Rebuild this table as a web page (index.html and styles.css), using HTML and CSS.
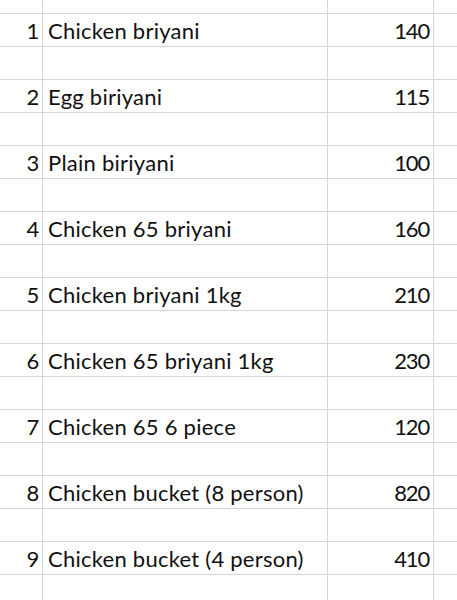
FILE: index.html
```html
<!DOCTYPE html>
<html>
<head>
<meta charset="utf-8">
<link rel="stylesheet" href="styles.css">
</head>
<body>
<div class="sheet">
  <div class="cell top"></div><div class="cell top"></div><div class="cell top"></div><div class="cell top"></div>

  <div class="cell num">1</div><div class="cell txt">Chicken briyani</div><div class="cell num">140</div><div class="cell"></div>
  <div class="cell"></div><div class="cell"></div><div class="cell"></div><div class="cell"></div>
  <div class="cell num">2</div><div class="cell txt">Egg biriyani</div><div class="cell num">115</div><div class="cell"></div>
  <div class="cell"></div><div class="cell"></div><div class="cell"></div><div class="cell"></div>
  <div class="cell num">3</div><div class="cell txt">Plain biriyani</div><div class="cell num">100</div><div class="cell"></div>
  <div class="cell"></div><div class="cell"></div><div class="cell"></div><div class="cell"></div>
  <div class="cell num">4</div><div class="cell txt">Chicken 65 briyani</div><div class="cell num">160</div><div class="cell"></div>
  <div class="cell"></div><div class="cell"></div><div class="cell"></div><div class="cell"></div>
  <div class="cell num">5</div><div class="cell txt">Chicken briyani 1kg</div><div class="cell num">210</div><div class="cell"></div>
  <div class="cell"></div><div class="cell"></div><div class="cell"></div><div class="cell"></div>
  <div class="cell num">6</div><div class="cell txt">Chicken 65 briyani 1kg</div><div class="cell num">230</div><div class="cell"></div>
  <div class="cell"></div><div class="cell"></div><div class="cell"></div><div class="cell"></div>
  <div class="cell num">7</div><div class="cell txt">Chicken 65 6 piece</div><div class="cell num">120</div><div class="cell"></div>
  <div class="cell"></div><div class="cell"></div><div class="cell"></div><div class="cell"></div>
  <div class="cell num">8</div><div class="cell txt">Chicken bucket (8 person)</div><div class="cell num">820</div><div class="cell"></div>
  <div class="cell"></div><div class="cell"></div><div class="cell"></div><div class="cell"></div>
  <div class="cell num">9</div><div class="cell txt">Chicken bucket (4 person)</div><div class="cell num">410</div><div class="cell"></div>
  <div class="cell"></div><div class="cell"></div><div class="cell"></div><div class="cell"></div>
</div>
</body>
</html>
```
FILE: styles.css
```css
html, body {
  margin: 0;
  padding: 0;
  background: #ffffff;
  overflow: hidden;
}
.sheet {
  display: grid;
  grid-template-columns: 42px 284px 105px 1fr;
  grid-template-rows: 13px;
  grid-auto-rows: 32px;
  gap: 1px;
  background: #d6d6d6;
  width: 457px;
  height: 600px;
  overflow: hidden;
  font-family: "Lato", "Open Sans", sans-serif;
  font-size: 22px;
  color: #111111;
}
.cell {
  background: #ffffff;
  display: flex;
  align-items: flex-end;
  padding: 0 5px 4px 5px;
  line-height: 1;
  white-space: nowrap;
  overflow: hidden;
}
.top {
  padding: 0;
}
.num {
  justify-content: flex-end;
  letter-spacing: -1.2px;
  padding-right: 4px;
}
.txt {
  justify-content: flex-start;
  letter-spacing: 0.25px;
}
```
